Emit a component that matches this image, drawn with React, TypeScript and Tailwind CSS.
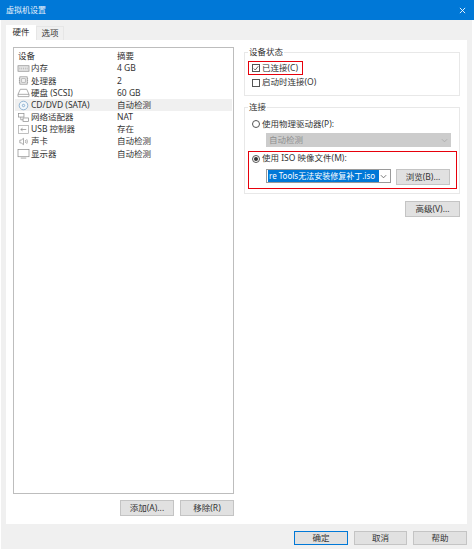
import React from "react";

const font = { fontFamily: '"Noto Sans","Noto Sans CJK SC",sans-serif' };

const I = ({ children }: { children: React.ReactNode }) => (
  <svg viewBox="0 0 14 12" className="w-[13px] h-[11px] shrink-0" fill="none" stroke="#8f8f8f" strokeWidth="0.8">{children}</svg>
);

const icons: Record<string, React.ReactNode> = {
  mem: <I><rect x="1" y="3" width="12" height="6" fill="#e8e8e8" /><path d="M3 5v2M5 5v2M7 5v2M9 5v2M11 5v2" stroke="#aaa" /></I>,
  cpu: <I><rect x="3" y="2" width="8" height="8" fill="#f2f2f2" /><rect x="5" y="4" width="4" height="4" stroke="#aaa" /><path d="M2 4h1M2 6h1M2 8h1M11 4h1M11 6h1M11 8h1" /></I>,
  disk: <I><path d="M3.5 2.5h7L13 8v2.5H1V8z" /><path d="M1 8h12" /></I>,
  cd: <I><circle cx="7" cy="6" r="4.7" stroke="#6f9cc4" fill="#f2f7fb" /><circle cx="7" cy="6" r="1.3" stroke="#6f9cc4" /></I>,
  net: <I><rect x="1.5" y="1.5" width="6" height="4" /><rect x="6.5" y="6.5" width="6" height="4" /><path d="M4 5.5V8.5h2.5" /></I>,
  usb: <I><rect x="1.5" y="1.5" width="11" height="9" stroke="#aaa" /><path d="M4 6h6M4 6l2-1.5M4 6l2 1.5" /></I>,
  snd: <I><path d="M3 4.5h1.5L7 2.5v7L4.5 7.5H3z" /><path d="M9 4.5q1 1.5 0 3M10.5 3.5q1.5 2.5 0 5" /></I>,
  mon: <I><rect x="1" y="1.5" width="12" height="8" /><path d="M4 11h6" /></I>,
};

const rows: [string, string, string, boolean?][] = [
  ["mem", "内存", "4 GB"],
  ["cpu", "处理器", "2"],
  ["disk", "硬盘 (SCSI)", "60 GB"],
  ["cd", "CD/DVD (SATA)", "自动检测", true],
  ["net", "网络适配器", "NAT"],
  ["usb", "USB 控制器", "存在"],
  ["snd", "声卡", "自动检测"],
  ["mon", "显示器", "自动检测"],
];

const Btn = ({ children, cls = "border-[#c4c4c4]" }: { children: React.ReactNode; cls?: string }) => (
  <div className={`flex items-center justify-center bg-[#e1e1e1] border ${cls}`}>{children}</div>
);

const Legend = ({ children }: { children: React.ReactNode }) => (
  <div className="absolute left-[3px] top-[-7px] bg-white px-[1px] leading-[12px]">{children}</div>
);

const Radio = ({ on }: { on?: boolean }) => (
  <span className="w-[8px] h-[8px] rounded-full border border-[#555] bg-white flex items-center justify-center shrink-0">
    {on && <span className="w-[4px] h-[4px] rounded-full bg-[#333]" />}
  </span>
);

const Check = ({ on }: { on?: boolean }) => (
  <span className="w-[8px] h-[8px] border border-[#555] bg-white flex items-center justify-center shrink-0">
    {on && (
      <svg viewBox="0 0 8 8" className="w-[7px] h-[7px]" fill="none" stroke="#333" strokeWidth="1">
        <path d="M1 4l2 2 4-5" />
      </svg>
    )}
  </span>
);

const Chevron = ({ color = "#666" }: { color?: string }) => (
  <svg viewBox="0 0 8 5" className="w-[7px] h-[5px]" fill="none" stroke={color} strokeWidth="1">
    <path d="M1 1l3 3 3-3" />
  </svg>
);

export default function App() {
  return (
    <div className="w-[474px] h-[551px] flex flex-col bg-white text-[8.5px] text-[#333] overflow-hidden" style={font}>
      <div className="h-[20px] shrink-0 bg-[#0078d7] text-[#e6f1fb] flex items-center justify-between pl-[6px] pr-[8px] text-[8px]">
        <span>虚拟机设置</span>
        <svg viewBox="0 0 8 8" className="w-[7px] h-[7px]" fill="none" stroke="#fff" strokeWidth="1">
          <path d="M1 1l6 6M7 1l-6 6" />
        </svg>
      </div>

      <div className="ml-[1px] w-[471px] h-[529px] shrink-0 bg-[#f0f0f0] flex flex-col">
        <div className="flex pl-[5px] pt-[5px] h-[20px] shrink-0 items-end">
          <div className="w-[30px] h-[15px] bg-white flex items-center justify-center">硬件</div>
          <div className="w-[28px] h-[14px] bg-[#f0f0f0] border border-b-0 border-[#e6e6e6] flex items-center justify-center">选项</div>
        </div>

        <div className="ml-[5px] w-[461px] h-[484px] bg-white flex shrink-0 pl-[7px] pt-[7px]">
          <div className="w-[221px] flex flex-col shrink-0">
            <div className="h-[447px] border border-[#bdbdbd] flex flex-col pt-[1px] px-[1px]">
              <div className="h-[13.5px] flex items-center leading-none">
                <span className="w-[102px] pl-[3px]">设备</span>
                <span>摘要</span>
              </div>
              {rows.map(([ic, name, val, sel]) => (
                <div key={name} className={`h-[12.2px] flex items-center leading-none ${sel ? "bg-[#f0f0f0]" : ""}`}>
                  <span className="w-[102px] flex items-center gap-[1px] pl-[2px] whitespace-nowrap">
                    {icons[ic]}
                    {name}
                  </span>
                  <span>{val}</span>
                </div>
              ))}
            </div>
            <div className="flex justify-end gap-[6px] mt-[6px]">
              <Btn cls="w-[54px] h-[16px] border-[#c4c4c4]">添加(A)...</Btn>
              <Btn cls="w-[54px] h-[16px] border-[#c4c4c4]">移除(R)</Btn>
            </div>
          </div>

          <div className="flex-1 pl-[10px] pt-[5px] flex flex-col">
            <div className="relative w-[216px] h-[44px] border border-[#e8e8e8] pl-[7px] pt-[8px] flex flex-col">
              <Legend>设备状态</Legend>
              <div className="-ml-[4px] w-[55px] h-[14px] border border-red-600 flex items-center gap-[2px] pl-[3px]">
                <Check on />
                <span>已连接(C)</span>
              </div>
              <div className="flex items-center gap-[2px] h-[11px] mt-[2px]">
                <Check />
                <span>启动时连接(O)</span>
              </div>
            </div>

            <div className="relative w-[216px] h-[87px] mt-[11px] border border-[#e8e8e8] flex flex-col pt-[10px]">
              <Legend>连接</Legend>
              <div className="flex items-center gap-[2px] pl-[7px] h-[12px]">
                <Radio />
                <span>使用物理驱动器(P):</span>
              </div>
              <div className="ml-[21px] mt-[3px] w-[185px] h-[14px] bg-[#cccccc] flex items-center justify-between px-[3px] text-[#8f8f8f]">
                <span>自动检测</span>
                <Chevron color="#aaa" />
              </div>
              <div className="ml-[3px] mt-[4px] w-[209px] h-[38px] border border-red-600 flex flex-col pl-[3px]">
                <div className="flex items-center gap-[2px] h-[13px]">
                  <Radio on />
                  <span>使用 ISO 映像文件(M):</span>
                </div>
                <div className="flex items-start mt-[4px] pl-[14px]">
                  <div className="w-[125px] h-[14px] border border-[#9a9a9a] bg-white flex items-center pl-[1px] pr-[2px]">
                    <span className="w-[111px] h-[12px] bg-[#0078d7] text-white text-[8px] leading-[12px] whitespace-nowrap overflow-hidden pl-[1px]">re Tools无法安装修复补丁.iso</span>
                    <span className="flex-1 flex justify-center"><Chevron /></span>
                  </div>
                  <Btn cls="w-[54px] h-[16px] ml-[5px] border-[#c4c4c4]">浏览(B)...</Btn>
                </div>
              </div>
            </div>

            <div className="flex justify-end w-[216px] mt-[7px]">
              <Btn cls="w-[55px] h-[16px] border-[#c4c4c4]">高级(V)...</Btn>
            </div>
          </div>
        </div>

        <div className="flex-1 flex justify-end gap-[6px] pt-[7px] pr-[5px]">
          <Btn cls="w-[54px] h-[14px] border-[#0078d7]">确定</Btn>
          <Btn cls="w-[53px] h-[14px] border-[#c4c4c4]">取消</Btn>
          <Btn cls="w-[54px] h-[14px] border-[#c4c4c4]">帮助</Btn>
        </div>
      </div>
    </div>
  );
}
